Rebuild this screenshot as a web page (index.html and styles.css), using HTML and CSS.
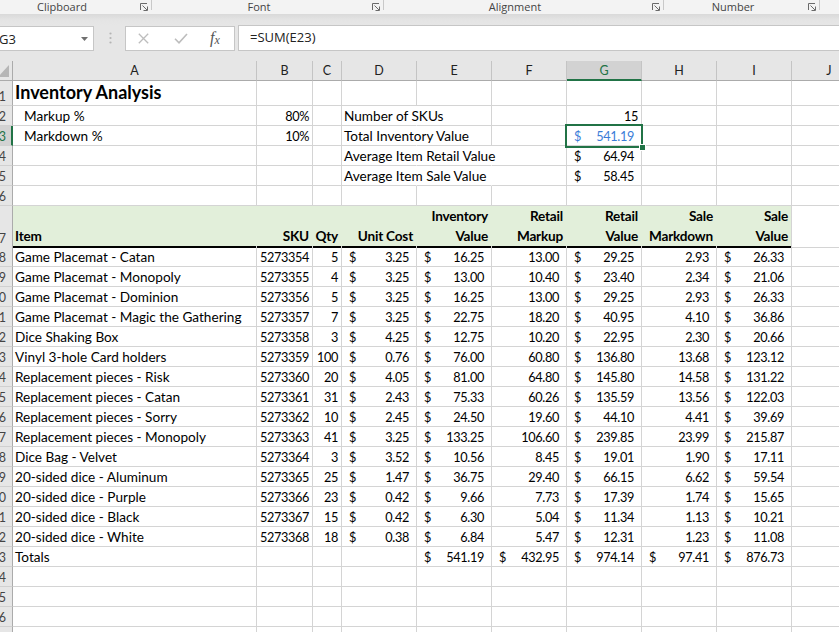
FILE: index.html
```html
<!DOCTYPE html>
<html>
<head>
<meta charset="utf-8">
<title>Inventory Analysis</title>
<link rel="stylesheet" href="styles.css">
</head>
<body>
<div class="ribbon">
  <div class="grp g1"><span class="lbl">Clipboard</span><svg class="launch" viewBox="0 0 8 8"><path d="M0.5 7V0.5H7M2.5 2.5L7 7M3.5 7.5H7.5V3.5"/></svg><span class="sep"></span></div>
  <div class="grp g2"><span class="lbl">Font</span><svg class="launch" viewBox="0 0 8 8"><path d="M0.5 7V0.5H7M2.5 2.5L7 7M3.5 7.5H7.5V3.5"/></svg><span class="sep"></span></div>
  <div class="grp g3"><span class="lbl">Alignment</span><svg class="launch" viewBox="0 0 8 8"><path d="M0.5 7V0.5H7M2.5 2.5L7 7M3.5 7.5H7.5V3.5"/></svg><span class="sep"></span></div>
  <div class="grp g4"><span class="lbl">Number</span><svg class="launch" viewBox="0 0 8 8"><path d="M0.5 7V0.5H7M2.5 2.5L7 7M3.5 7.5H7.5V3.5"/></svg><span class="sep"></span></div>
</div>
<div class="fbar">
  <div class="namebox"><span class="nbtext">G3</span><svg class="dd" viewBox="0 0 7 4"><path d="M0 0H7L3.5 4Z"/></svg></div>
  <svg class="dots" viewBox="0 0 3 12"><circle cx="1.5" cy="1.5" r="1.1"/><circle cx="1.5" cy="6" r="1.1"/><circle cx="1.5" cy="10.5" r="1.1"/></svg>
  <div class="fxbox">
    <svg class="xicon" viewBox="0 0 11 11"><path d="M0.8 0.8L10.2 10.2M10.2 0.8L0.8 10.2"/></svg>
    <svg class="okicon" viewBox="0 0 14 11"><path d="M1 5.8L5 9.8L13 1"/></svg>
    <span class="fx">f<span class="fxx">x</span></span>
  </div>
  <div class="formula">=SUM(E23)</div>
</div>
<div class="sheet">
  <div class="row hdr">
    <div class="corner"><svg viewBox="0 0 12 19"><path d="M-2 16H9V4Z"/></svg></div>
    <div class="ch">A</div><div class="ch">B</div><div class="ch">C</div><div class="ch">D</div><div class="ch">E</div><div class="ch">F</div><div class="ch sel">G</div><div class="ch">H</div><div class="ch">I</div><div class="ch">J</div>
  </div>
  <div class="row r1">
    <div class="rh">1</div><div class="c title">Inventory Analysis</div><div class="c"></div><div class="c"></div><div class="c"></div><div class="c"></div><div class="c"></div><div class="c"></div><div class="c"></div><div class="c"></div><div class="c"></div>
  </div>
  <div class="row">
    <div class="rh">2</div><div class="c ind">Markup %</div><div class="c n">80%</div><div class="c"></div><div class="c spill">Number of SKUs</div><div class="c"></div><div class="c"></div><div class="c n">15</div><div class="c"></div><div class="c"></div><div class="c"></div>
  </div>
  <div class="row">
    <div class="rh sel">3</div><div class="c ind">Markdown %</div><div class="c n">10%</div><div class="c"></div><div class="c spill">Total Inventory Value</div><div class="c"></div><div class="c"></div><div class="c a active"><span>$</span><span>541.19</span><i class="selbox"><i class="handle"></i></i></div><div class="c"></div><div class="c"></div><div class="c"></div>
  </div>
  <div class="row">
    <div class="rh">4</div><div class="c"></div><div class="c"></div><div class="c"></div><div class="c spill">Average Item Retail Value</div><div class="c spill"></div><div class="c"></div><div class="c a"><span>$</span><span>64.94</span></div><div class="c"></div><div class="c"></div><div class="c"></div>
  </div>
  <div class="row">
    <div class="rh">5</div><div class="c"></div><div class="c"></div><div class="c"></div><div class="c spill">Average Item Sale Value</div><div class="c spill"></div><div class="c"></div><div class="c a"><span>$</span><span>58.45</span></div><div class="c"></div><div class="c"></div><div class="c"></div>
  </div>
  <div class="row">
    <div class="rh">6</div><div class="c"></div><div class="c"></div><div class="c"></div><div class="c"></div><div class="c"></div><div class="c"></div><div class="c"></div><div class="c"></div><div class="c"></div><div class="c"></div>
  </div>
  <div class="row r7">
    <div class="rh">7</div>
    <div class="c hd left"><span>Item</span></div>
    <div class="c hd"><span>SKU</span></div>
    <div class="c hd"><span>Qty</span></div>
    <div class="c hd"><span>Unit Cost</span></div>
    <div class="c hd"><span>Inventory</span><span>Value</span></div>
    <div class="c hd"><span>Retail</span><span>Markup</span></div>
    <div class="c hd"><span>Retail</span><span>Value</span></div>
    <div class="c hd"><span>Sale</span><span>Markdown</span></div>
    <div class="c hd last"><span>Sale</span><span>Value</span></div>
    <div class="c"></div>
  </div>
  <div class="row r8">
    <div class="rh">8</div><div class="c">Game Placemat - Catan</div><div class="c n">5273354</div><div class="c n">5</div><div class="c a"><span>$</span><span>3.25</span></div><div class="c a"><span>$</span><span>16.25</span></div><div class="c m">13.00</div><div class="c a"><span>$</span><span>29.25</span></div><div class="c m">2.93</div><div class="c a"><span>$</span><span>26.33</span></div><div class="c"></div>
  </div>
  <div class="row">
    <div class="rh">9</div><div class="c">Game Placemat - Monopoly</div><div class="c n">5273355</div><div class="c n">4</div><div class="c a"><span>$</span><span>3.25</span></div><div class="c a"><span>$</span><span>13.00</span></div><div class="c m">10.40</div><div class="c a"><span>$</span><span>23.40</span></div><div class="c m">2.34</div><div class="c a"><span>$</span><span>21.06</span></div><div class="c"></div>
  </div>
  <div class="row">
    <div class="rh">10</div><div class="c">Game Placemat - Dominion</div><div class="c n">5273356</div><div class="c n">5</div><div class="c a"><span>$</span><span>3.25</span></div><div class="c a"><span>$</span><span>16.25</span></div><div class="c m">13.00</div><div class="c a"><span>$</span><span>29.25</span></div><div class="c m">2.93</div><div class="c a"><span>$</span><span>26.33</span></div><div class="c"></div>
  </div>
  <div class="row">
    <div class="rh">11</div><div class="c">Game Placemat - Magic the Gathering</div><div class="c n">5273357</div><div class="c n">7</div><div class="c a"><span>$</span><span>3.25</span></div><div class="c a"><span>$</span><span>22.75</span></div><div class="c m">18.20</div><div class="c a"><span>$</span><span>40.95</span></div><div class="c m">4.10</div><div class="c a"><span>$</span><span>36.86</span></div><div class="c"></div>
  </div>
  <div class="row">
    <div class="rh">12</div><div class="c">Dice Shaking Box</div><div class="c n">5273358</div><div class="c n">3</div><div class="c a"><span>$</span><span>4.25</span></div><div class="c a"><span>$</span><span>12.75</span></div><div class="c m">10.20</div><div class="c a"><span>$</span><span>22.95</span></div><div class="c m">2.30</div><div class="c a"><span>$</span><span>20.66</span></div><div class="c"></div>
  </div>
  <div class="row">
    <div class="rh">13</div><div class="c">Vinyl 3-hole Card holders</div><div class="c n">5273359</div><div class="c n">100</div><div class="c a"><span>$</span><span>0.76</span></div><div class="c a"><span>$</span><span>76.00</span></div><div class="c m">60.80</div><div class="c a"><span>$</span><span>136.80</span></div><div class="c m">13.68</div><div class="c a"><span>$</span><span>123.12</span></div><div class="c"></div>
  </div>
  <div class="row">
    <div class="rh">14</div><div class="c">Replacement pieces - Risk</div><div class="c n">5273360</div><div class="c n">20</div><div class="c a"><span>$</span><span>4.05</span></div><div class="c a"><span>$</span><span>81.00</span></div><div class="c m">64.80</div><div class="c a"><span>$</span><span>145.80</span></div><div class="c m">14.58</div><div class="c a"><span>$</span><span>131.22</span></div><div class="c"></div>
  </div>
  <div class="row">
    <div class="rh">15</div><div class="c">Replacement pieces - Catan</div><div class="c n">5273361</div><div class="c n">31</div><div class="c a"><span>$</span><span>2.43</span></div><div class="c a"><span>$</span><span>75.33</span></div><div class="c m">60.26</div><div class="c a"><span>$</span><span>135.59</span></div><div class="c m">13.56</div><div class="c a"><span>$</span><span>122.03</span></div><div class="c"></div>
  </div>
  <div class="row">
    <div class="rh">16</div><div class="c">Replacement pieces - Sorry</div><div class="c n">5273362</div><div class="c n">10</div><div class="c a"><span>$</span><span>2.45</span></div><div class="c a"><span>$</span><span>24.50</span></div><div class="c m">19.60</div><div class="c a"><span>$</span><span>44.10</span></div><div class="c m">4.41</div><div class="c a"><span>$</span><span>39.69</span></div><div class="c"></div>
  </div>
  <div class="row">
    <div class="rh">17</div><div class="c">Replacement pieces - Monopoly</div><div class="c n">5273363</div><div class="c n">41</div><div class="c a"><span>$</span><span>3.25</span></div><div class="c a"><span>$</span><span>133.25</span></div><div class="c m">106.60</div><div class="c a"><span>$</span><span>239.85</span></div><div class="c m">23.99</div><div class="c a"><span>$</span><span>215.87</span></div><div class="c"></div>
  </div>
  <div class="row">
    <div class="rh">18</div><div class="c">Dice Bag - Velvet</div><div class="c n">5273364</div><div class="c n">3</div><div class="c a"><span>$</span><span>3.52</span></div><div class="c a"><span>$</span><span>10.56</span></div><div class="c m">8.45</div><div class="c a"><span>$</span><span>19.01</span></div><div class="c m">1.90</div><div class="c a"><span>$</span><span>17.11</span></div><div class="c"></div>
  </div>
  <div class="row">
    <div class="rh">19</div><div class="c">20-sided dice - Aluminum</div><div class="c n">5273365</div><div class="c n">25</div><div class="c a"><span>$</span><span>1.47</span></div><div class="c a"><span>$</span><span>36.75</span></div><div class="c m">29.40</div><div class="c a"><span>$</span><span>66.15</span></div><div class="c m">6.62</div><div class="c a"><span>$</span><span>59.54</span></div><div class="c"></div>
  </div>
  <div class="row">
    <div class="rh">20</div><div class="c">20-sided dice - Purple</div><div class="c n">5273366</div><div class="c n">23</div><div class="c a"><span>$</span><span>0.42</span></div><div class="c a"><span>$</span><span>9.66</span></div><div class="c m">7.73</div><div class="c a"><span>$</span><span>17.39</span></div><div class="c m">1.74</div><div class="c a"><span>$</span><span>15.65</span></div><div class="c"></div>
  </div>
  <div class="row">
    <div class="rh">21</div><div class="c">20-sided dice - Black</div><div class="c n">5273367</div><div class="c n">15</div><div class="c a"><span>$</span><span>0.42</span></div><div class="c a"><span>$</span><span>6.30</span></div><div class="c m">5.04</div><div class="c a"><span>$</span><span>11.34</span></div><div class="c m">1.13</div><div class="c a"><span>$</span><span>10.21</span></div><div class="c"></div>
  </div>
  <div class="row">
    <div class="rh">22</div><div class="c">20-sided dice - White</div><div class="c n">5273368</div><div class="c n">18</div><div class="c a"><span>$</span><span>0.38</span></div><div class="c a"><span>$</span><span>6.84</span></div><div class="c m">5.47</div><div class="c a"><span>$</span><span>12.31</span></div><div class="c m">1.23</div><div class="c a"><span>$</span><span>11.08</span></div><div class="c"></div>
  </div>
  <div class="row">
    <div class="rh">23</div><div class="c">Totals</div><div class="c"></div><div class="c"></div><div class="c"></div><div class="c a"><span>$</span><span>541.19</span></div><div class="c a"><span>$</span><span>432.95</span></div><div class="c a"><span>$</span><span>974.14</span></div><div class="c a"><span>$</span><span>97.41</span></div><div class="c a"><span>$</span><span>876.73</span></div><div class="c"></div>
  </div>
  <div class="row">
    <div class="rh">24</div><div class="c"></div><div class="c"></div><div class="c"></div><div class="c"></div><div class="c"></div><div class="c"></div><div class="c"></div><div class="c"></div><div class="c"></div><div class="c"></div>
  </div>
  <div class="row">
    <div class="rh">25</div><div class="c"></div><div class="c"></div><div class="c"></div><div class="c"></div><div class="c"></div><div class="c"></div><div class="c"></div><div class="c"></div><div class="c"></div><div class="c"></div>
  </div>
  <div class="row">
    <div class="rh">26</div><div class="c"></div><div class="c"></div><div class="c"></div><div class="c"></div><div class="c"></div><div class="c"></div><div class="c"></div><div class="c"></div><div class="c"></div><div class="c"></div>
  </div>
  <div class="row">
    <div class="rh">27</div><div class="c"></div><div class="c"></div><div class="c"></div><div class="c"></div><div class="c"></div><div class="c"></div><div class="c"></div><div class="c"></div><div class="c"></div><div class="c"></div>
  </div>
</div>
</body>
</html>
```
FILE: styles.css
```css
* { box-sizing: border-box; margin: 0; padding: 0; }
html, body { width: 839px; height: 632px; overflow: hidden; background: #fff; }
body { font-family: Lato, "Liberation Sans", sans-serif; font-size: 13.6px; color: #000; }

/* ribbon group labels */
.ribbon { height: 14px; background: #f3f3f3; display: flex; margin-left: -10px; font-family: "Open Sans", "Noto Sans", sans-serif; font-size: 11px; color: #444; }
.grp { display: flex; align-items: flex-start; height: 14px; flex: none; }
.g1 { width: 162px; }
.g2 { width: 232px; }
.g3 { width: 280px; }
.g4 { width: 156px; }
.lbl { flex: 1; text-align: center; line-height: 13px; padding-right: 6px; white-space: nowrap; }
.launch { width: 8px; height: 8px; margin-top: 3px; margin-right: 3px; flex: none; fill: none; stroke: #6a6a6a; stroke-width: 1; }
.sep { width: 1px; height: 10px; background: #c9c9c9; flex: none; }

/* formula bar */
.fbar { height: 47px; background: linear-gradient(#d9d9d9, #e4e4e4 6px, #e6e6e6 11px); padding-top: 11px; display: flex; align-items: flex-start; font-family: "Open Sans", "Noto Sans", sans-serif; font-size: 13px; color: #222; }
.namebox { margin-left: -6px; margin-top: 1px; width: 100px; height: 25px; background: #fff; border: 1px solid #c6c6c6; display: flex; align-items: center; padding-left: 4px; flex: none; }
.nbtext { flex: 1; }
.dd { width: 7px; height: 4px; margin-right: 5px; fill: #707070; }
.dots { width: 3px; height: 12px; margin: 7px 0 0 15px; fill: #b4b4b4; flex: none; }
.fxbox { margin-left: 13px; margin-top: 1px; width: 110px; height: 25px; background: #fff; border: 1px solid #c6c6c6; display: flex; align-items: center; padding-left: 12px; flex: none; }
.xicon { width: 11px; height: 11px; fill: none; stroke: #bdbdbd; stroke-width: 1.3; }
.okicon { width: 14px; height: 11px; margin-left: 25px; fill: none; stroke: #bdbdbd; stroke-width: 1.6; }
.fx { margin-left: 22px; font-family: "Liberation Serif", serif; font-style: italic; font-size: 16px; color: #555; line-height: 16px; }
.fxx { font-size: 12px; position: relative; top: 1px; }
.formula { flex: 1; height: 26px; margin-left: 3px; background: #fff; border: 1px solid #c6c6c6; border-right: none; padding-left: 11px; line-height: 23px; }

/* sheet grid */
.row { display: grid; grid-template-columns: 13px 244px 56px 29px repeat(7, 75px); height: 20px; }
.r1 { height: 25px; }
.r7 { height: 40px; }
.r8 { height: 21px; }
.hdr { height: 20px; }

.corner { background: #e6e6e6; border-right: 1px solid #ababab; border-bottom: 1px solid #ababab; overflow: hidden; }
.corner svg { display: block; width: 12px; height: 19px; fill: #b6b6b6; }
.ch { background: #e6e6e6; border-right: 1px solid #c4c4c4; border-bottom: 1px solid #ababab; display: flex; align-items: center; justify-content: center; color: #222; font-size: 12.5px; }
.ch.sel { background: #d2d2d2; color: #217346; border-bottom: 2px solid #217346; padding-top: 1px; }

.rh { background: #e6e6e6; border-right: 1px solid #ababab; border-bottom: 1px solid #d0d0d0; color: #444; font-size: 12.5px; display: flex; justify-content: flex-end; align-items: flex-end; padding-right: 6px; overflow: hidden; line-height: 17px; white-space: nowrap; }
.rh.sel { background: #d2d2d2; color: #217346; border-right: 2px solid #217346; padding-right: 5px; }

.c { border-right: 1px solid #d4d4d4; border-bottom: 1px solid #d4d4d4; display: flex; align-items: flex-end; padding: 0 2px; white-space: nowrap; line-height: 18px; min-width: 0; }
.title { font-weight: 700; font-size: 18px; line-height: 22px; padding-bottom: 2px; }
.ind { padding-left: 11px; }
.spill { border-right-color: transparent; }
.n { justify-content: flex-end; padding-right: 3px; font-size: 12.7px; letter-spacing: -0.35px; }
.m { justify-content: flex-end; padding-right: 7px; font-size: 12.7px; letter-spacing: -0.35px; }
.a { justify-content: space-between; padding: 0 7px 0 7px; font-size: 12.7px; letter-spacing: -0.35px; }

.hd { background: #e2efda; border-right-color: #e2efda; border-bottom: 2px solid #000; flex-direction: column; justify-content: flex-end; align-items: flex-end; font-weight: 700; line-height: 20px; padding-right: 3px; letter-spacing: -0.2px; }
.hd.left { align-items: flex-start; padding-left: 2px; }
.hd.last { border-right-color: #d4d4d4; }

.active { position: relative; color: #3b7dd8; }
.selbox { position: absolute; left: -2px; top: -2px; right: -2px; bottom: -3px; border: 2px solid #217346; z-index: 2; }
.handle { position: absolute; right: -5px; bottom: -5px; width: 7px; height: 7px; background: #217346; border: 1px solid #fff; }
```
